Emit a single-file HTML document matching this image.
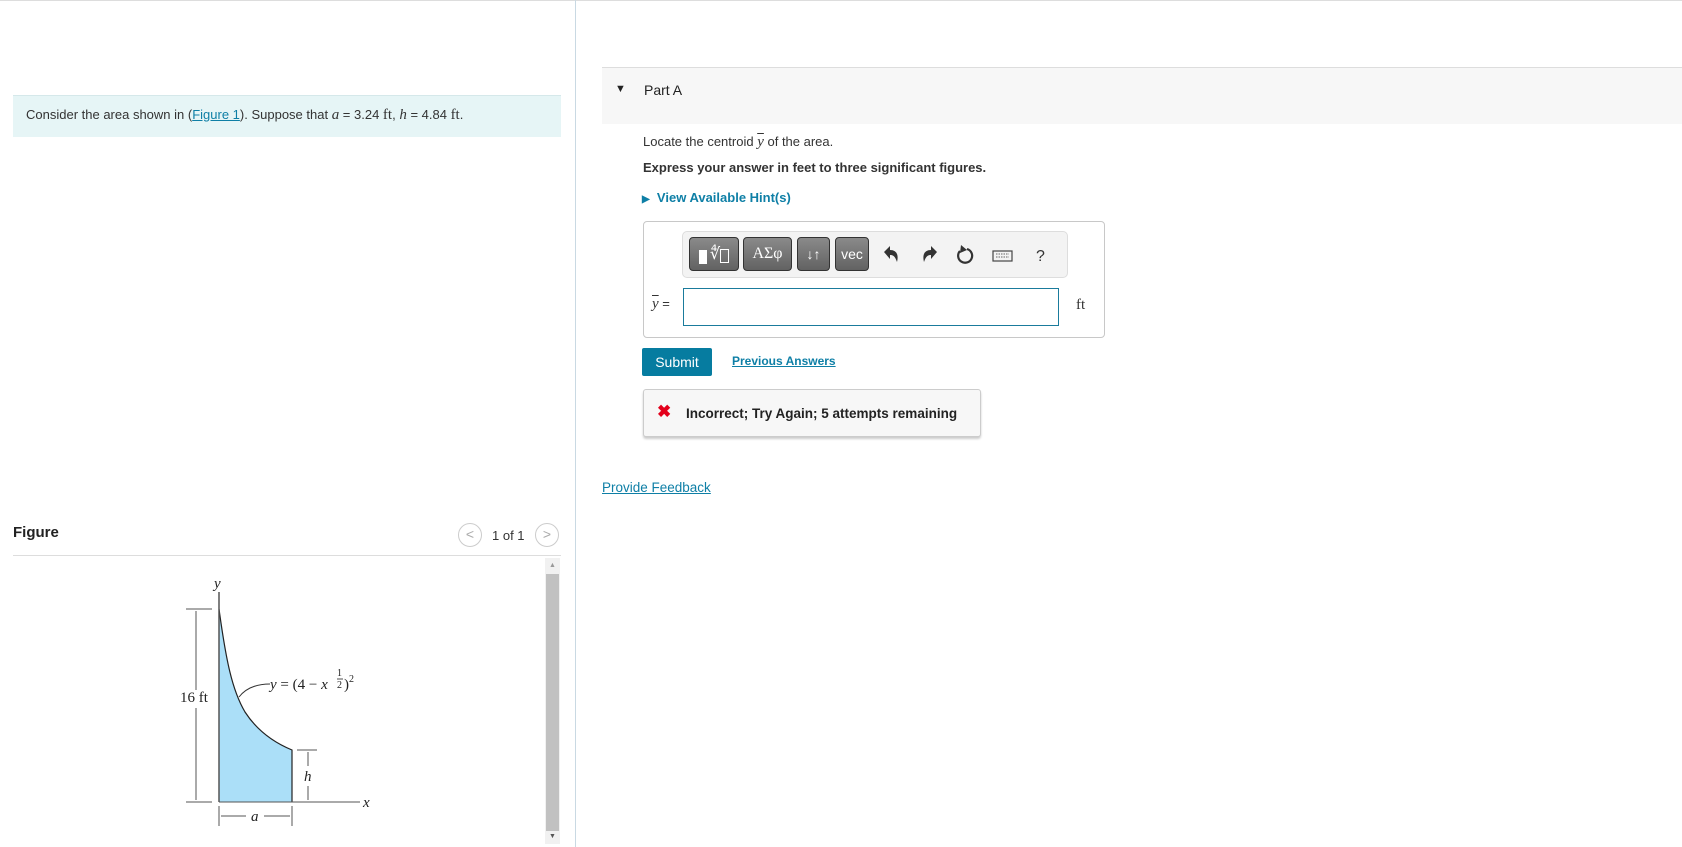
<!DOCTYPE html>
<html><head><meta charset="utf-8"><style>
*{margin:0;padding:0;box-sizing:border-box}
body{width:1682px;height:847px;background:#fff;font-family:"Liberation Sans",Arial,sans-serif;color:#333;position:relative;overflow:hidden}
.a{position:absolute;white-space:nowrap}
.link{color:#0e7fa6;text-decoration:underline}
.btn{position:absolute;top:237px;height:34px;background:linear-gradient(#8a8a8a,#626262);border:1px solid #333;border-radius:4px;color:#fff;font-size:15px;display:flex;align-items:center;justify-content:center}
</style></head><body>
<div class="a" style="left:0;top:0;width:1682px;height:1px;background:#ddd"></div>
<div class="a" style="left:575px;top:0;width:1px;height:847px;background:#c9d9e3"></div>

<div class="a" style="left:13px;top:95px;width:548px;height:42px;background:#e6f5f6;border-top:1px solid #d5e8ea"></div>
<div class="a" style="left:26px;top:107px;font-size:13px;color:#333">Consider the area shown in (<span class="link">Figure 1</span>). Suppose that <i style="font-family:'Liberation Serif',serif;font-size:15px">a</i> = 3.24 <span style="font-family:'Liberation Serif',serif;font-size:15px">ft</span>, <i style="font-family:'Liberation Serif',serif;font-size:15px">h</i> = 4.84 <span style="font-family:'Liberation Serif',serif;font-size:15px">ft</span>.</div>

<div class="a" style="left:13px;top:524px;font-size:15px;font-weight:bold;color:#222">Figure</div>
<div class="a" style="left:458px;top:523px;width:24px;height:24px;border:1px solid #ccc;border-radius:50%;color:#aaa;font-size:14px;text-align:center;line-height:21px">&lt;</div>
<div class="a" style="left:492px;top:528px;font-size:13px;color:#333">1 of 1</div>
<div class="a" style="left:535px;top:523px;width:24px;height:24px;border:1px solid #ccc;border-radius:50%;color:#aaa;font-size:14px;text-align:center;line-height:21px">&gt;</div>
<div class="a" style="left:13px;top:555px;width:548px;height:1px;background:#ddd"></div>
<div class="a" style="left:545px;top:558px;width:15px;height:286px;background:#f1f1f1"></div>
<div class="a" style="left:546px;top:574px;width:13px;height:257px;background:#c1c1c1"></div>
<div class="a" style="left:549px;top:562px;font-size:7px;color:#999">▲</div>
<div class="a" style="left:549px;top:833px;font-size:7px;color:#555">▼</div>

<svg class="a" style="left:0;top:0" width="575" height="847">
<path d="M219 609 C226 660 232 690 245 712 C258 732 275 743 292 750 L292 802 L219 802 Z" fill="#abdff8" stroke="none"/>
<path d="M219 609 C226 660 232 690 245 712 C258 732 275 743 292 750 L292 802" fill="none" stroke="#222" stroke-width="1.2"/>
<line x1="219" y1="592" x2="219" y2="802" stroke="#555" stroke-width="1.5"/>
<line x1="219" y1="802" x2="360" y2="802" stroke="#555" stroke-width="1"/>
<line x1="186" y1="609" x2="212" y2="609" stroke="#555"/><line x1="186" y1="802" x2="212" y2="802" stroke="#555"/>
<line x1="196" y1="611" x2="196" y2="690" stroke="#555"/><line x1="196" y1="708" x2="196" y2="800" stroke="#555"/>
<line x1="297" y1="750" x2="317" y2="750" stroke="#555"/>
<line x1="308" y1="752" x2="308" y2="766" stroke="#555"/><line x1="308" y1="786" x2="308" y2="800" stroke="#555"/>
<line x1="219" y1="806" x2="219" y2="826" stroke="#555"/><line x1="292" y1="806" x2="292" y2="826" stroke="#555"/>
<line x1="221" y1="816" x2="246" y2="816" stroke="#555"/><line x1="264" y1="816" x2="290" y2="816" stroke="#555"/>
<path d="M239 697 C246 688 256 684 270 684" fill="none" stroke="#333"/>
<g font-family="Liberation Serif,serif" fill="#222">
<text x="214" y="588" font-size="15" font-style="italic">y</text>
<text x="180" y="702" font-size="15">16 ft</text>
<text x="270" y="689" font-size="15"><tspan font-style="italic">y</tspan> = (4 − <tspan font-style="italic">x</tspan></text>
<text x="337" y="676" font-size="10">1</text><line x1="337" y1="679" x2="343" y2="679" stroke="#222" stroke-width=".8"/><text x="337" y="688" font-size="10">2</text>
<text x="344" y="689" font-size="15">)</text><text x="349" y="682" font-size="10">2</text>
<text x="304" y="781" font-size="15" font-style="italic">h</text>
<text x="363" y="807" font-size="15" font-style="italic">x</text>
<text x="251" y="821" font-size="15" font-style="italic">a</text>
</g></svg>

<div class="a" style="left:602px;top:67px;width:1080px;height:57px;background:#f7f7f7;border-top:1px solid #ddd"></div>
<div class="a" style="left:615px;top:83px;font-size:11px;color:#222">▼</div>
<div class="a" style="left:644px;top:82px;font-size:14px;color:#222">Part A</div>
<div class="a" style="left:643px;top:134px;font-size:13px">Locate the centroid <i style="font-family:'Liberation Serif',serif;font-size:15px;text-decoration:overline">y</i> of the area.</div>
<div class="a" style="left:643px;top:160px;font-size:13px;font-weight:bold">Express your answer in feet to three significant figures.</div>
<div class="a" style="left:642px;top:190px;font-size:13px;font-weight:bold;color:#0e7fa6"><span style="font-size:10px;color:#0e7fa6">▶</span>&nbsp; View Available Hint(s)</div>

<div class="a" style="left:643px;top:221px;width:462px;height:117px;border:1px solid #c8c8c8;border-radius:4px"></div>
<div class="a" style="left:682px;top:231px;width:386px;height:47px;background:#f3f3f3;border:1px solid #ddd;border-radius:5px"></div>
<div class="btn" style="left:689px;width:50px"><span style="display:inline-block;width:8px;height:14px;background:#fff;margin-right:3px;margin-top:6px"></span><span style="font-size:16px">∜</span><span style="display:inline-block;width:9px;height:14px;border:1px solid #fff;margin-top:4px"></span></div>
<div class="btn" style="left:743px;width:49px;font-family:'Liberation Serif',serif;font-size:16px">ΑΣφ</div>
<div class="btn" style="left:797px;width:33px;font-size:14px">↓↑</div>
<div class="btn" style="left:835px;width:34px;font-size:14px">vec</div>
<svg class="a" style="left:880px;top:243px" width="180" height="24">
<path d="M4 9 L10 3 L10 7 C16 7 19 11 17 19 C15 13 13 12 10 12 L10 16 Z" fill="#333"/>
<path d="M57 9 L51 3 L51 7 C45 7 42 11 44 19 C46 13 48 12 51 12 L51 16 Z" fill="#333"/>
<path d="M80 8 A7 7 0 1 0 87 6" fill="none" stroke="#333" stroke-width="2.2"/><path d="M81 2 L87 7 L80 10 Z" fill="#333"/>
<rect x="113" y="8" width="19" height="10" fill="none" stroke="#444" stroke-width="1.2"/>
<path d="M116 11h13M116 14h13" stroke="#666" stroke-dasharray="1.5 1"/>
<text x="156" y="18" font-size="16" fill="#333" font-family="Liberation Sans">?</text>
</svg>
<div class="a" style="left:652px;top:296px;font-size:13px"><i style="font-family:'Liberation Serif',serif;font-size:15px;text-decoration:overline">y</i> =</div>
<div class="a" style="left:683px;top:288px;width:376px;height:38px;border:1px solid #1a7b9c"></div>
<div class="a" style="left:1076px;top:297px;font-family:'Liberation Serif',serif;font-size:15px">ft</div>

<div class="a" style="left:642px;top:348px;width:70px;height:28px;background:#067ca0;border-radius:2px;color:#fff;font-size:14px;text-align:center;line-height:28px">Submit</div>
<div class="a" style="left:732px;top:354px;font-size:12px;font-weight:bold" ><span class="link">Previous Answers</span></div>

<div class="a" style="left:643px;top:389px;width:338px;height:48px;background:#f7f7f7;border:1px solid #ccc;border-radius:3px;box-shadow:0 2px 2px #ccc"></div>
<div class="a" style="left:657px;top:402px;font-size:17px;font-weight:bold;color:#e3001b">✖</div>
<div class="a" style="left:686px;top:406px;font-size:13.5px;font-weight:bold;color:#222">Incorrect; Try Again; 5 attempts remaining</div>

<div class="a" style="left:602px;top:480px;font-size:13.5px"><span class="link">Provide Feedback</span></div>
</body></html>
